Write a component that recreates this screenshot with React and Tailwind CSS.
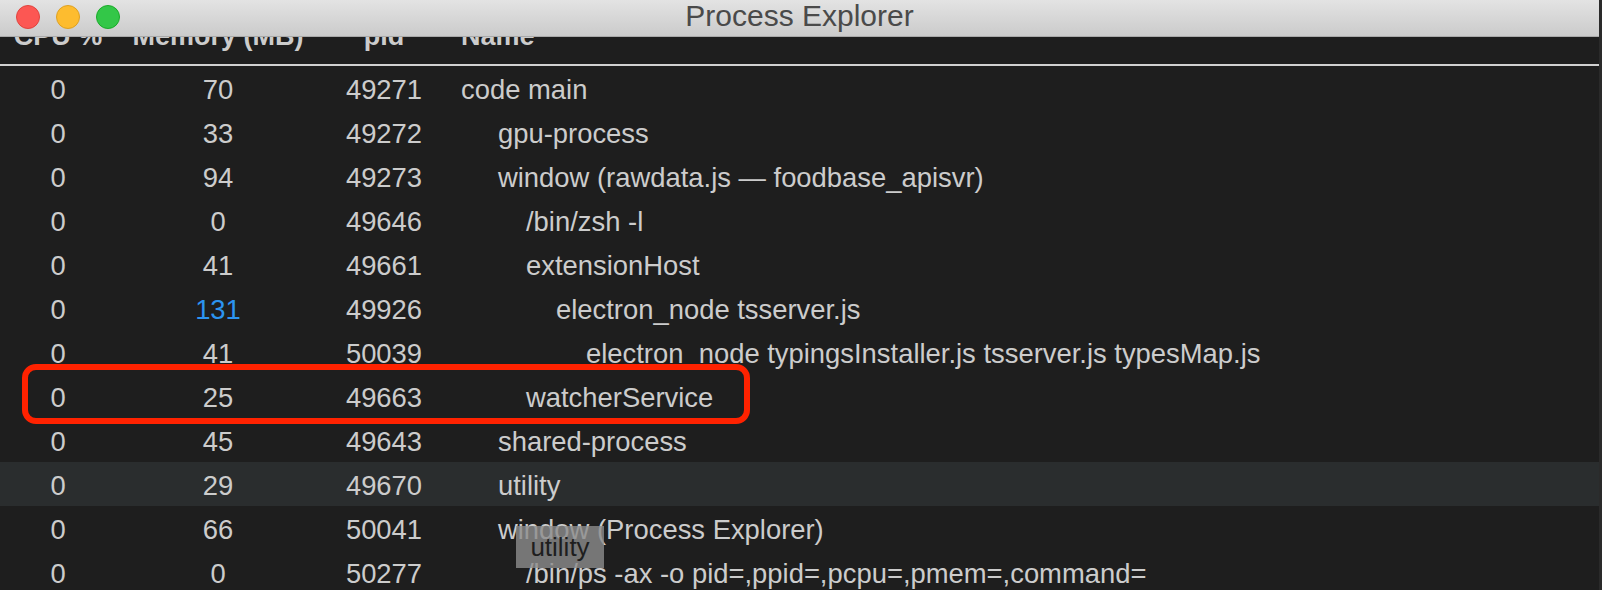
import React from "react";

const rows = [
  { cpu: "0", mem: "70", pid: "49271", name: "code main", depth: 0 },
  { cpu: "0", mem: "33", pid: "49272", name: "gpu-process", depth: 1 },
  { cpu: "0", mem: "94", pid: "49273", name: "window (rawdata.js — foodbase_apisvr)", depth: 1 },
  { cpu: "0", mem: "0", pid: "49646", name: "/bin/zsh -l", depth: 2 },
  { cpu: "0", mem: "41", pid: "49661", name: "extensionHost", depth: 2 },
  { cpu: "0", mem: "131", pid: "49926", name: "electron_node tsserver.js", depth: 3, hot: true },
  { cpu: "0", mem: "41", pid: "50039", name: "electron_node typingsInstaller.js tsserver.js typesMap.js", depth: 4 },
  { cpu: "0", mem: "25", pid: "49663", name: "watcherService", depth: 2 },
  { cpu: "0", mem: "45", pid: "49643", name: "shared-process", depth: 1 },
  { cpu: "0", mem: "29", pid: "49670", name: "utility", depth: 1, selected: true },
  { cpu: "0", mem: "66", pid: "50041", name: "window (Process Explorer)", depth: 1 },
  { cpu: "0", mem: "0", pid: "50277", name: "/bin/ps -ax -o pid=,ppid=,pcpu=,pmem=,command=", depth: 2 },
];

const indent = ["pl-0", "pl-[37px]", "pl-[65px]", "pl-[95px]", "pl-[125px]"];

const gridCols = "grid grid-cols-[116px_204px_128px_1fr]";

const ProcessExplorer = () => {
  return (
    <div
      className="relative h-[590px] w-[1602px] overflow-hidden bg-[#2a2a2a]"
      style={{ fontFamily: '"Liberation Sans", Arial, sans-serif' }}
    >
      <div className="flex h-full w-[1599px] flex-col bg-[#1e1e1e]">
        {/* title bar */}
        <div className="relative z-10 flex h-[37px] shrink-0 items-start justify-center border-b border-[#a9a9a9] bg-gradient-to-b from-[#e3e3e3] to-[#cbcbcb]">
          <div className="absolute left-[16px] top-[5px] flex gap-[16px]">
            <span className="h-[24px] w-[24px] rounded-full border border-[#e0443e] bg-[#fc5753]" />
            <span className="h-[24px] w-[24px] rounded-full border border-[#dea123] bg-[#fdbc2f]" />
            <span className="h-[24px] w-[24px] rounded-full border border-[#1aab29] bg-[#33c748]" />
          </div>
          <span className="text-[30px] leading-[31px] text-[#4a4a4a]">Process Explorer</span>
        </div>

        {/* table header, scrolled up under the title bar */}
        <div className="h-[27px] shrink-0 overflow-hidden">
          <div className={`${gridCols} -mt-[14px] text-[27px] font-bold leading-[27px] text-[#cccccc]`}>
            <div className="text-center">CPU %</div>
            <div className="text-center">Memory (MB)</div>
            <div className="text-center">pid</div>
            <div className="pl-[13px]">Name</div>
          </div>
        </div>
        <div className="h-[2px] shrink-0 bg-[#d0d0d0]" />

        {/* rows */}
        <div className="flex flex-col text-[27.4px] text-[#cccccc]">
          {rows.map((row) => (
            <div
              key={row.pid}
              className={`${gridCols} h-[44px] shrink-0 items-start whitespace-nowrap pt-[4px] leading-[40px] ${
                row.selected ? "bg-[#2a2d2e]" : ""
              }`}
            >
              <div className="text-center">{row.cpu}</div>
              <div className={`text-center ${row.hot ? "text-[#2c94f0]" : ""}`}>{row.mem}</div>
              <div className="text-center">{row.pid}</div>
              <div className="pl-[13px]">
                <span className={indent[row.depth]}>{row.name}</span>
              </div>
            </div>
          ))}
        </div>
      </div>

      {/* annotation around watcherService */}
      <div className="pointer-events-none absolute left-[22px] top-[364px] h-[60px] w-[728px] rounded-[14px] border-[6px] border-[#ff2200]" />

      {/* hover tooltip */}
      <div className="pointer-events-none absolute left-[516px] top-[526px] flex h-[42px] w-[88px] items-center justify-center bg-[#8c8c8c]/80 text-[26px] text-[#1e1e1e]">
        utility
      </div>
    </div>
  );
};

export default function App() {
  return <ProcessExplorer />;
}
